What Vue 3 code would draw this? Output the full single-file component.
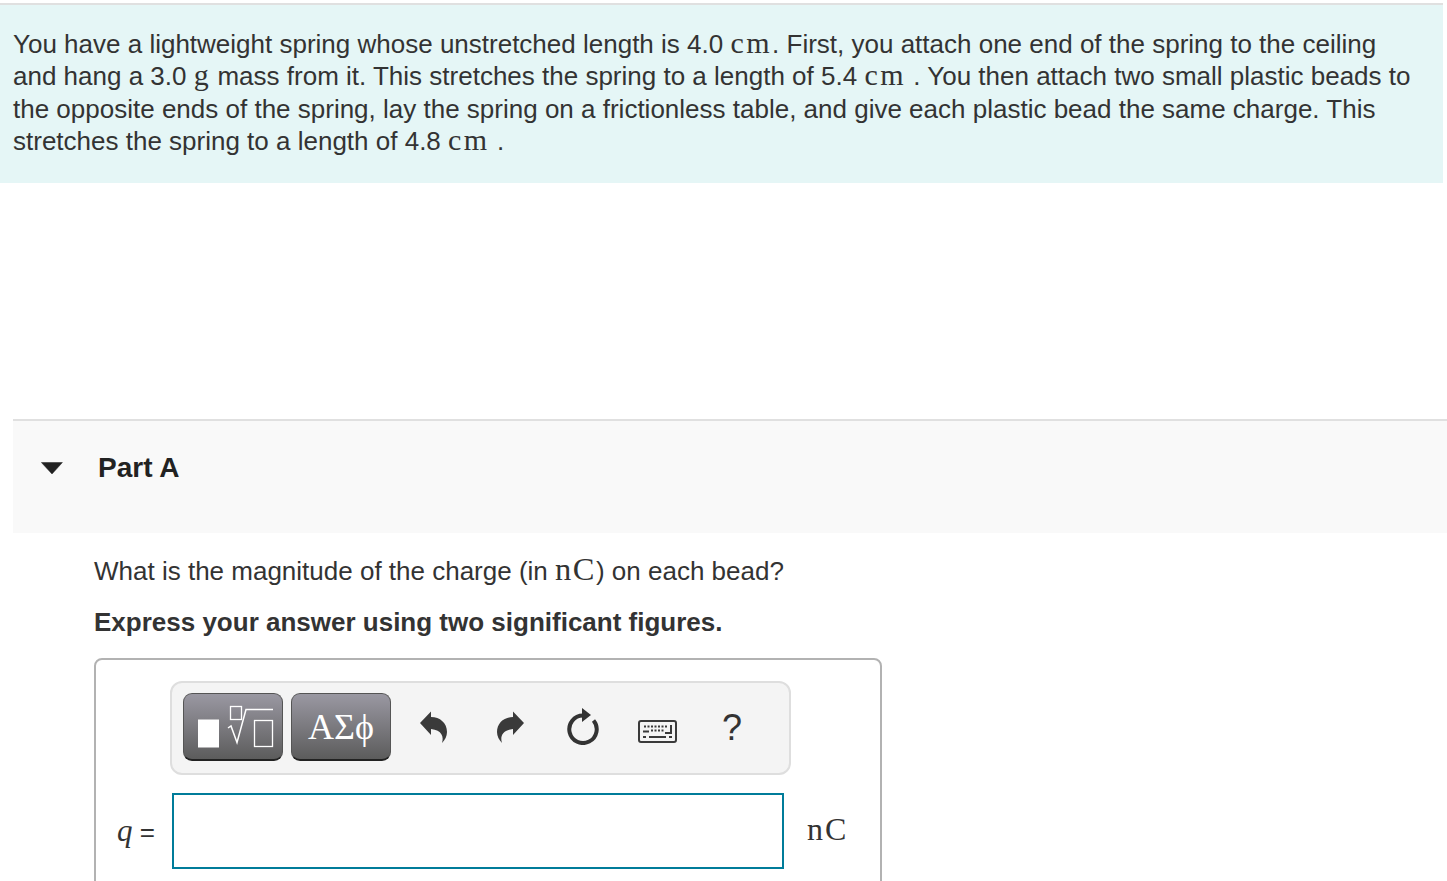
<template>
  <div class="page">
    <section class="intro">
      <div class="line">You have a lightweight spring whose unstretched length is 4.0 <span class="math">cm</span>. First, you attach one end of the spring to the ceiling</div>
      <div class="line">and hang a 3.0 <span class="math single">g</span> mass from it. This stretches the spring to a length of 5.4 <span class="math">cm</span> . You then attach two small plastic beads to</div>
      <div class="line">the opposite ends of the spring, lay the spring on a frictionless table, and give each plastic bead the same charge. This</div>
      <div class="line">stretches the spring to a length of 4.8 <span class="math">cm</span> .</div>
    </section>

    <section class="part">
      <header class="part-head">
        <svg class="caret" width="22" height="12" viewBox="0 0 22 12">
          <path d="M0.400 0.500H21.400L11 12Z" fill="#222" stroke="#222" stroke-width="0.500" stroke-linejoin="round" />
        </svg>
        <h2>Part A</h2>
      </header>

      <div class="part-body">
        <p class="question">What is the magnitude of the charge (in <span class="math big">nC</span>) on each bead?</p>
        <p class="hint">Express your answer using two significant figures.</p>

        <div class="answer-box">
          <div class="toolbar">
            <button class="tool-btn templates">
              <svg width="98" height="65" viewBox="0 0 98 65">
                <rect x="14" y="25.500" width="21" height="28" fill="#fff" />
                <rect x="46.500" y="12.500" width="11" height="13" fill="none" stroke="#fff" stroke-width="1.300" />
                <path d="M44 34L47 32L53 48.500L62 15.500H89" fill="none" stroke="#fff" stroke-width="1.500" />
                <rect x="70.500" y="26.500" width="18" height="26" fill="none" stroke="#fff" stroke-width="1.300" />
              </svg>
            </button>
            <button class="tool-btn symbols">ΑΣϕ</button>

            <svg class="icon undo" width="28" height="32" viewBox="0 0 28 32">
              <path d="M0 12L11 0.500V6C20 6 27 12 27 21C27 25 25 29 22 32C24 26 22 19 11 18V24Z" fill="#3a3a3a" />
            </svg>
            <svg class="icon redo" width="28" height="32" viewBox="0 0 28 32">
              <path d="M27 12L16 0.500V6C7 6 0 12 0 21C0 25 2 29 5 32C3 26 5 19 16 18V24Z" fill="#3a3a3a" />
            </svg>
            <svg class="icon reset" width="34" height="38" viewBox="0 0 34 38">
              <path d="M17 8.600A13.700 13.700 0 1 0 27.500 13.500" fill="none" stroke="#333" stroke-width="4" />
              <path d="M16 1L25 8L16 15Z" fill="#333" />
            </svg>
            <svg class="icon keyboard" width="39" height="23" viewBox="0 0 39 23">
              <rect x="1" y="1" width="37" height="21" rx="2" fill="#f4f4f4" stroke="#3a3a3a" stroke-width="2" />
              <path d="M6 6.500H30M13 10.500H27" fill="none" stroke="#3a3a3a" stroke-width="2" stroke-dasharray="2 1.500" />
              <path d="M5 11.500H11M33 5V13H27M5 17H8M11 17H28M31 17H34" fill="none" stroke="#3a3a3a" stroke-width="2" />
            </svg>
            <span class="help">?</span>
          </div>

          <div class="answer-row">
            <span class="label"><i>q</i> =</span>
            <div class="input"></div>
            <span class="unit">nC</span>
          </div>
        </div>
      </div>
    </section>
  </div>
</template>

<script setup>
</script>

<style scoped>
.page {
  height: 881px;
  overflow: hidden;
  padding-top: 3px;
  box-sizing: border-box;
  font-family: "Liberation Sans", Arial, sans-serif;
  color: #333;
}

.intro {
  margin-right: 4px;
  border-top: 2px solid #e0e0e0;
  background: #e5f6f6;
  padding: 23px 13px 0;
  height: 155px;
  font-size: 26px;
  line-height: 32.4px;
}

.line {
  white-space: nowrap;
}

.part-body p {
  margin: 0;
}

.math {
  font-family: "Liberation Serif", serif;
  font-size: 30px;
  line-height: 1;
  letter-spacing: 2.5px;
}

.math.single {
  letter-spacing: 1.5px;
}

.math.big {
  font-size: 32.500px;
  letter-spacing: 1.5px;
}

.part {
  margin: 236px 0 0 13px;
}

.part-head {
  display: flex;
  align-items: center;
  box-sizing: border-box;
  height: 114px;
  border-top: 2px solid #e0e0e0;
  background: #f9f9f9;
  padding: 0 0 19px 28px;
}

.part-head h2 {
  margin: 0 0 0 35px;
  font-size: 28px;
  font-weight: bold;
  color: #222;
}

.part-body {
  padding: 20px 0 0 81px;
}

.question {
  font-size: 26px;
  line-height: 36px;
}

.hint {
  margin-top: 15px !important;
  font-size: 26px;
  line-height: 36px;
  font-weight: bold;
}

.answer-box {
  margin-top: 18px;
  width: 710px;
  height: 240px;
  border: 2px solid #b2b2b2;
  border-radius: 8px;
  padding: 21px 0 0 74px;
}

.toolbar {
  display: flex;
  align-items: center;
  width: 606px;
  height: 90px;
  border: 2px solid #dedede;
  border-radius: 12px;
  background: #f4f4f4;
  padding-left: 11px;
}

.tool-btn {
  display: flex;
  align-items: center;
  justify-content: center;
  box-sizing: border-box;
  height: 68px;
  margin-top: -2px;
  padding: 0;
  border: 1px solid #555;
  border-bottom: 2px solid #222;
  border-radius: 9px;
  background: linear-gradient(#9a98a2, #5c5c5c);
  color: #fff;
}

.templates {
  width: 100px;
}

.symbols {
  width: 100px;
  margin-left: 8px;
  font-family: "Liberation Serif", serif;
  font-size: 36px;
}

.icon {
  flex: none;
}

.undo {
  margin: -2px 0 0 29px;
}

.redo {
  margin: -2px 0 0 49px;
}

.reset {
  margin: -4px 0 0 41px;
}

.keyboard {
  margin: 7px 0 0 38px;
}

.help {
  margin: 0 0 0 45px;
  font-size: 36px;
  color: #333;
}

.answer-row {
  display: flex;
  align-items: center;
  margin: 18px 0 0 -54px;
}

.label {
  width: 56px;
  font-size: 26px;
  padding-left: 1px;
  box-sizing: border-box;
  white-space: nowrap;
}

.label i {
  font-family: "Liberation Serif", serif;
  font-size: 31px;
}

.input {
  width: 612px;
  height: 76px;
  box-sizing: border-box;
  border: 2px solid #007c9a;
  background: #fff;
}

.unit {
  margin: 0 0 4px 23px;
  font-family: "Liberation Serif", serif;
  font-size: 32px;
  letter-spacing: 2px;
  color: #333;
}
</style>

<style>
html,
body {
  margin: 0;
  overflow: hidden;
  background: #fff;
}
</style>
